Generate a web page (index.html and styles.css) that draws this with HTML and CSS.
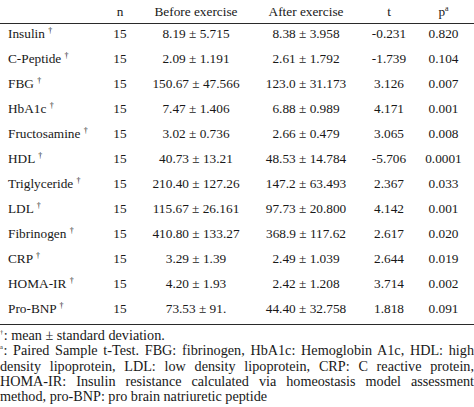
FILE: index.html
```html
<!DOCTYPE html>
<html>
<head>
<meta charset="utf-8">
<link rel="stylesheet" href="styles.css">
</head>
<body>
<div class="page">
<table class="stats">
<colgroup>
<col class="c-label"><col class="c-n"><col class="c-before"><col class="c-after"><col class="c-t"><col class="c-p">
</colgroup>
<thead>
<tr><th></th><th>n</th><th>Before exercise</th><th>After exercise</th><th>t</th><th>p<sup class="sa">a</sup></th></tr>
</thead>
<tbody>
<tr><td>Insulin <sup>†</sup></td><td>15</td><td>8.19 ± 5.715</td><td>8.38 ± 3.958</td><td>-0.231</td><td>0.820</td></tr>
<tr><td>C-Peptide <sup>†</sup></td><td>15</td><td>2.09 ± 1.191</td><td>2.61 ± 1.792</td><td>-1.739</td><td>0.104</td></tr>
<tr><td>FBG <sup>†</sup></td><td>15</td><td>150.67 ± 47.566</td><td>123.0 ± 31.173</td><td>3.126</td><td>0.007</td></tr>
<tr><td>HbA1c <sup>†</sup></td><td>15</td><td>7.47 ± 1.406</td><td>6.88 ± 0.989</td><td>4.171</td><td>0.001</td></tr>
<tr><td>Fructosamine <sup>†</sup></td><td>15</td><td>3.02 ± 0.736</td><td>2.66 ± 0.479</td><td>3.065</td><td>0.008</td></tr>
<tr><td>HDL <sup>†</sup></td><td>15</td><td>40.73 ± 13.21</td><td>48.53 ± 14.784</td><td>-5.706</td><td>0.0001</td></tr>
<tr><td>Triglyceride <sup>†</sup></td><td>15</td><td>210.40 ± 127.26</td><td>147.2 ± 63.493</td><td>2.367</td><td>0.033</td></tr>
<tr><td>LDL <sup>†</sup></td><td>15</td><td>115.67 ± 26.161</td><td>97.73 ± 20.800</td><td>4.142</td><td>0.001</td></tr>
<tr><td>Fibrinogen <sup>†</sup></td><td>15</td><td>410.80 ± 133.27</td><td>368.9 ± 117.62</td><td>2.617</td><td>0.020</td></tr>
<tr><td>CRP <sup>†</sup></td><td>15</td><td>3.29 ± 1.39</td><td>2.49 ± 1.039</td><td>2.644</td><td>0.019</td></tr>
<tr><td>HOMA-IR <sup>†</sup></td><td>15</td><td>4.20 ± 1.93</td><td>2.42 ± 1.208</td><td>3.714</td><td>0.002</td></tr>
<tr><td>Pro-BNP <sup>†</sup></td><td>15</td><td>73.53 ± 91.</td><td>44.40 ± 32.758</td><td>1.818</td><td>0.091</td></tr>
</tbody>
</table>
<div class="notes">
<p class="note"><sup>†</sup>: mean ± standard deviation.</p>
<p class="note"><sup>a</sup>: Paired Sample t-Test. FBG: fibrinogen, HbA1c: Hemoglobin A1c, HDL: high density lipoprotein, LDL: low density lipoprotein, CRP: C reactive protein, HOMA-IR: Insulin resistance calculated via homeostasis model assessment method, pro-BNP: pro brain natriuretic peptide</p>
</div>
</div>
</body>
</html>
```

FILE: styles.css
```css
html, body {
  margin: 0;
  padding: 0;
  background: #ffffff;
}
.page {
  width: 474px;
  font-family: "Liberation Serif", "Times New Roman", serif;
  font-size: 13.3px;
  color: #181818;
}
.stats {
  width: 474px;
  border-collapse: collapse;
  table-layout: fixed;
}
.c-label { width: 95px; }
.c-n { width: 50px; }
.c-before { width: 102px; }
.c-after { width: 118px; }
.c-t { width: 48px; }
.c-p { width: 61px; }
.stats th {
  font-weight: normal;
  text-align: center;
  height: 23px;
  padding: 0;
  line-height: 15px;
  vertical-align: middle;
  border-bottom: 1.5px solid #2a2a2a;
}
.stats td {
  text-align: center;
  padding: 2px 0 0 0;
  height: 23px;
  line-height: 15px;
  vertical-align: top;
  white-space: nowrap;
}
.stats td:first-child {
  text-align: left;
  padding-left: 8px;
}
.stats tbody tr:last-child td {
  border-bottom: 1.5px solid #2a2a2a;
}
.stats sup {
  font-size: 8px;
  vertical-align: 5px;
  line-height: 0;
}
.notes {
  padding-top: 3px;
  font-size: 14.2px;
}
.note {
  margin: 0;
  line-height: 15.3px;
  text-align: justify;
}
.note sup {
  display: inline-block;
  font-size: 6.5px;
  line-height: 7px;
  vertical-align: top;
  padding-right: 0.5px;
}
```
